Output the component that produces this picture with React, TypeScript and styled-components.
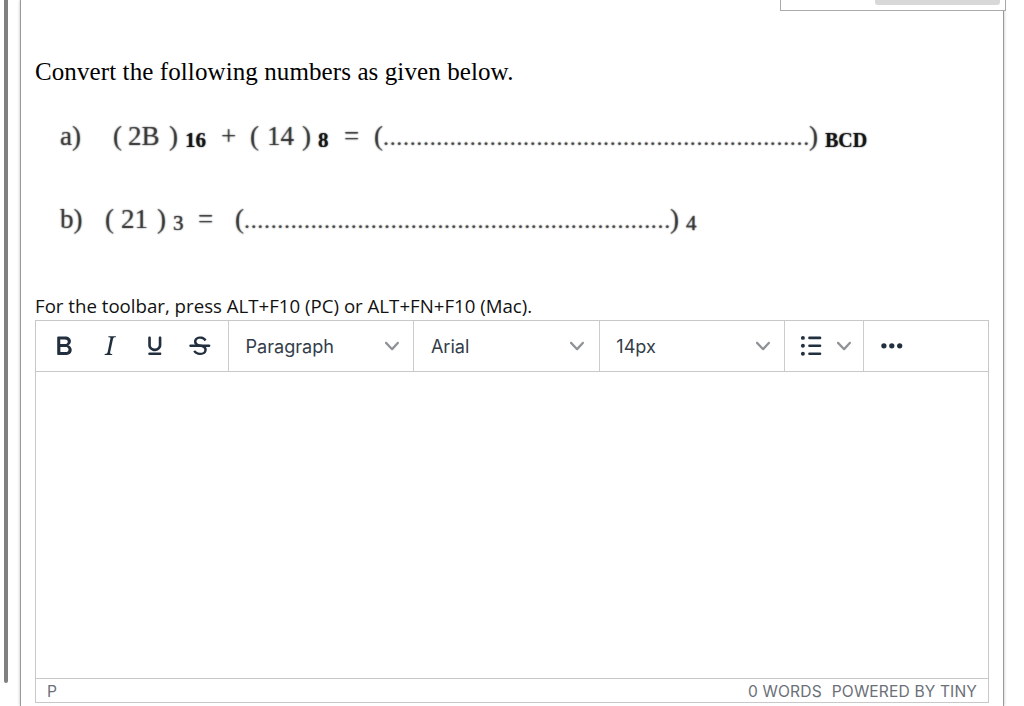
import styled, { createGlobalStyle } from "styled-components";

const GlobalStyle = createGlobalStyle`
  *, *::before, *::after {
    box-sizing: border-box;
  }
  body {
    margin: 0;
    background: #fff;
    overflow: hidden;
  }
`;

interface Part {
  text: string;
  width: number;
  kind?: "sub" | "boldSub" | "label" | "dots";
}

const DOTS = ".".repeat(64);

const firstEquation: Part[] = [
  { text: "a)", width: 53 },
  { text: "(", width: 15 },
  { text: "2B", width: 41 },
  { text: ")", width: 16 },
  { text: "16", width: 36, kind: "boldSub" },
  { text: "+", width: 29 },
  { text: "(", width: 17 },
  { text: "14", width: 35 },
  { text: ")", width: 16 },
  { text: "8", width: 26, kind: "boldSub" },
  { text: "=", width: 30 },
  { text: "(", width: 9 },
  { text: DOTS, width: 426, kind: "dots" },
  { text: ")", width: 16 },
  { text: "BCD", width: 44, kind: "label" },
];

const secondEquation: Part[] = [
  { text: "b)", width: 45 },
  { text: "(", width: 16 },
  { text: "21", width: 36 },
  { text: ")", width: 16 },
  { text: "3", width: 25, kind: "sub" },
  { text: "=", width: 37 },
  { text: "(", width: 9 },
  { text: DOTS, width: 426, kind: "dots" },
  { text: ")", width: 16 },
  { text: "4", width: 20, kind: "sub" },
];

const Equation = ({ parts }: { parts: Part[] }) => (
  <EquationRow>
    {parts.map(({ text, width, kind }, index) => (
      <Term key={index} $width={width} $kind={kind}>
        {text}
      </Term>
    ))}
  </EquationRow>
);

const Chevron = () => (
  <svg width="14" height="14" viewBox="0 0 10 10" fill="#8f9297">
    <path d="M8.7 2.2c.3-.3.8-.3 1 0 .4.4.4.9 0 1.2L5.7 7.8c-.3.3-.9.3-1.2 0L.2 3.4a.8.8 0 0 1 0-1.2c.3-.3.8-.3 1.1 0L5 6l3.7-3.8Z" />
  </svg>
);

const App = () => (
  <>
    <GlobalStyle />
    <Page>
      <Rail />
      <Panel>
        <Question>Convert the following numbers as given below.</Question>
        <Equations>
          <Equation parts={firstEquation} />
          <Equation parts={secondEquation} />
        </Equations>
        <Hint>For the toolbar, press ALT+F10 (PC) or ALT+FN+F10 (Mac).</Hint>
        <Editor>
          <Toolbar>
            <Group $width={193}>
              <IconButton aria-label="Bold">
                <Icon viewBox="0 0 24 24">
                  <path d="M7.8 19c-.3 0-.5 0-.6-.2l-.2-.5V5.7c0-.2 0-.4.2-.5l.6-.2h5c1.5 0 2.7.3 3.5 1 .7.6 1.1 1.4 1.1 2.5a3 3 0 0 1-.6 1.9c-.4.6-1 1-1.6 1.2.4.1.9.3 1.3.6s.8.7 1 1.2c.4.4.5 1 .5 1.6 0 1.3-.4 2.3-1.3 3-.8.7-2.1 1-3.8 1H7.8Zm5-8.3c.6 0 1.2-.1 1.6-.5.4-.3.6-.7.6-1.3 0-1.1-.8-1.7-2.3-1.7H9.3v3.5h3.4Zm.5 6c.7 0 1.3-.1 1.7-.4.4-.4.6-.9.6-1.5s-.2-1-.7-1.4c-.4-.3-1-.4-2-.4H9.4v3.8h4Z" />
                </Icon>
              </IconButton>
              <IconButton aria-label="Italic">
                <Icon viewBox="0 0 24 24">
                  <path d="m16.7 4.7-.1.9h-.3c-.6 0-1 0-1.4.3-.3.3-.4.6-.5 1.1l-2.1 9.8v.6c0 .5.4.8 1.4.8h.2l-.2.8H8l.2-.8h.2c1.1 0 1.8-.5 2-1.5l2-9.8.1-.5c0-.6-.4-.8-1.4-.8h-.3l.2-.9h5.8Z" />
                </Icon>
              </IconButton>
              <IconButton aria-label="Underline">
                <Icon viewBox="0 0 24 24">
                  <path d="M16 5c.6 0 1 .4 1 1v5.5a4 4 0 0 1-.4 1.8l-1 1.4a5.3 5.3 0 0 1-5.5 1 5 5 0 0 1-1.6-1c-.5-.4-.8-.9-1.1-1.4a4 4 0 0 1-.4-1.8V6c0-.6.4-1 1-1s1 .4 1 1v5.5c0 .3 0 .6.2 1l.6.7a3.3 3.3 0 0 0 2.2.8 3.4 3.4 0 0 0 2.2-.8c.3-.2.4-.5.6-.8l.2-.9V6c0-.6.4-1 1-1ZM8 17h8c.6 0 1 .4 1 1s-.4 1-1 1H8a1 1 0 0 1 0-2Z" />
                </Icon>
              </IconButton>
              <IconButton aria-label="Strikethrough">
                <Icon viewBox="0 0 24 24">
                  <path d="M15.6 8.5c-.5-.7-1-1.1-1.3-1.3-.6-.4-1.3-.6-2-.6-2.7 0-2.8 1.7-2.8 2.1 0 1.6 1.8 2 3.2 2.3 4.4.9 4.6 2.8 4.6 3.9 0 1.4-.7 4.1-5 4.1A6.2 6.2 0 0 1 7 16.4l1.5-1.1c.4.6 1.6 2 3.7 2 1.6 0 2.5-.4 3-1.2.4-.8.3-2-.8-2.6-.7-.4-1.6-.7-2.9-1-1-.2-3.9-.8-3.9-3.6C7.6 6 10.3 5 12.4 5c2.9 0 4.2 1.6 4.7 2.4l-1.5 1.1Z" />
                  <path d="M5 11h14a1 1 0 0 1 0 2H5a1 1 0 0 1 0-2Z" />
                </Icon>
              </IconButton>
            </Group>
            {["Paragraph", "Arial", "14px"].map((label) => (
              <Select key={label}>
                {label}
                <Chevron />
              </Select>
            ))}
            <ListGroup>
              <Icon viewBox="0 0 24 24">
                <path d="M11 5h8a1 1 0 0 1 0 2h-8a1 1 0 0 1 0-2Zm0 6h8a1 1 0 0 1 0 2h-8a1 1 0 0 1 0-2Zm0 6h8a1 1 0 0 1 0 2h-8a1 1 0 0 1 0-2Z" />
                <circle cx="6" cy="6" r="1.5" />
                <circle cx="6" cy="12" r="1.5" />
                <circle cx="6" cy="18" r="1.5" />
              </Icon>
              <Chevron />
            </ListGroup>
            <MoreButton aria-label="More">
              <Icon viewBox="0 0 24 24">
                <circle cx="6" cy="12" r="2" />
                <circle cx="12" cy="12" r="2" />
                <circle cx="18" cy="12" r="2" />
              </Icon>
            </MoreButton>
          </Toolbar>
          <Content />
          <StatusBar>
            <span>P</span>
            <StatusRight>
              <span>0 WORDS</span>
              <span>POWERED BY TINY</span>
            </StatusRight>
          </StatusBar>
        </Editor>
      </Panel>
      <Overlay>
        <OverlayBar />
      </Overlay>
    </Page>
  </>
);
export default App;

const Page = styled.div`
  display: flex;
  height: 706px;
  width: 1024px;
  overflow: hidden;
  position: relative;
`;

const Rail = styled.div`
  background: #808080;
  border-radius: 0 0 2px 2px;
  height: 683px;
  margin: 0 12px 0 4px;
  width: 4px;
`;

const Panel = styled.main`
  border: solid #999;
  border-width: 0 1px;
  box-shadow: 0 0 3px rgba(0, 0, 0, 0.25);
  display: flex;
  flex-direction: column;
  height: 706px;
  padding: 57px 14px 0;
  width: 984px;
`;

const Question = styled.div`
  color: #000;
  font: 25px/30px "Liberation Serif", serif;
  height: 29px;
  letter-spacing: 0.1px;
  white-space: nowrap;
`;

const Equations = styled.div`
  color: rgba(30, 30, 30, 0.55);
  display: flex;
  flex-direction: column;
  gap: 43px;
  padding: 30px 0 0 25px;
  height: 207px;
  text-shadow: 0 0 1.5px rgba(0, 0, 0, 0.75);
`;

const EquationRow = styled.div`
  font: 27px/40px "Liberation Serif", serif;
  height: 40px;
  white-space: nowrap;
`;

const kinds = {
  sub: "font-size: 21px; vertical-align: -2px; -webkit-text-stroke: 0.4px rgba(30, 30, 30, 0.55);",
  boldSub: "font-size: 21px; font-weight: bold; vertical-align: -2px; color: rgba(0, 0, 0, 0.75);",
  label: "font-size: 20px; font-weight: bold; vertical-align: -2px; color: rgba(0, 0, 0, 0.75);",
  dots: "font-size: 24px; letter-spacing: 0.67px;",
};

const Term = styled.span<{ $width: number; $kind?: Part["kind"] }>`
  display: inline-block;
  line-height: 28px;
  width: ${({ $width }) => $width}px;
  ${({ $kind }) => $kind && kinds[$kind]}
`;

const Hint = styled.div`
  color: #111;
  font: 18.67px/26px "Open Sans", sans-serif;
  height: 27px;
  white-space: nowrap;
`;

const Editor = styled.div`
  border: 1px solid #c8c8c8;
  display: flex;
  flex-direction: column;
  height: 383px;
  width: 954px;
`;

const Toolbar = styled.div`
  border-bottom: 1px solid #c8c8c8;
  color: #333d49;
  display: flex;
  flex: none;
  font: 18.1px Inter, sans-serif;
  height: 51px;
`;

const Group = styled.div<{ $width: number }>`
  align-items: center;
  border-right: 1px solid #ccc;
  display: flex;
  padding-left: 5.5px;
  width: ${({ $width }) => $width}px;
`;

const IconButton = styled.button`
  align-items: center;
  background: none;
  border: 0;
  display: flex;
  flex: none;
  justify-content: center;
  padding: 0;
  width: 45.3px;
`;

const Icon = styled.svg`
  fill: #222f3e;
  flex: none;
  height: 31.6px;
  width: 31.6px;
`;

const Select = styled.div`
  align-items: center;
  border-right: 1px solid #ccc;
  display: flex;
  justify-content: space-between;
  padding: 0 14.5px 1px 16.5px;
  width: 185.4px;
`;

const ListGroup = styled.div`
  align-items: center;
  border-right: 1px solid #ccc;
  display: flex;
  gap: 10px;
  padding-left: 10px;
  width: 79px;
`;

const MoreButton = styled(IconButton)`
  margin-left: 5px;
`;

const Content = styled.div`
  flex: 1;
`;

const StatusBar = styled.div`
  align-items: center;
  border-top: 1px solid #c8c8c8;
  color: #6b7078;
  display: flex;
  flex: none;
  font: 15.6px Inter, sans-serif;
  height: 24px;
  justify-content: space-between;
  letter-spacing: 0.12px;
  padding: 1px 11px 0;
  white-space: nowrap;
`;

const StatusRight = styled.div`
  display: flex;
  gap: 10px;
`;

const Overlay = styled.div`
  background: #fff;
  border: solid #aaa;
  border-width: 0 1px 1px;
  display: flex;
  height: 11px;
  justify-content: flex-end;
  left: 780px;
  padding-right: 5px;
  position: absolute;
  top: 0;
  width: 226px;
`;

const OverlayBar = styled.div`
  background: #d8d8d8;
  border-radius: 0 0 3px 3px;
  height: 5px;
  width: 125px;
`;
